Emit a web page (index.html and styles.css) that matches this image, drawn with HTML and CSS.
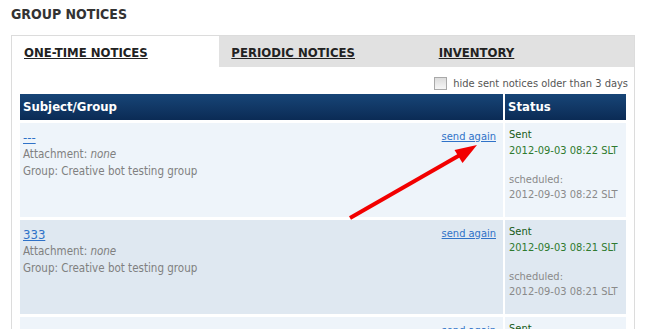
FILE: index.html
```html
<!DOCTYPE html>
<html>
<head>
<meta charset="utf-8">
<title>Group Notices</title>
<link rel="stylesheet" href="styles.css">
</head>
<body>
<div class="page">
  <h1 class="title">GROUP NOTICES</h1>
  <div class="panel">
    <div class="tabs">
      <div class="tab active"><a href="#">ONE-TIME NOTICES</a></div>
      <div class="tab"><a href="#">PERIODIC NOTICES</a></div>
      <div class="tab"><a href="#">INVENTORY</a></div>
    </div>
    <div class="filter">
      <input type="checkbox" class="check" id="hide">
      <label for="hide">hide sent notices older than 3 days</label>
    </div>
    <div class="grid">
      <div class="th">Subject/Group</div>
      <div class="th">Status</div>

      <div class="cell subj odd">
        <a class="send" href="#">send again</a>
        <a class="name" href="#">---</a>
        <div class="meta">Attachment: <i>none</i></div>
        <div class="meta">Group: Creative bot testing group</div>
      </div>
      <div class="cell status odd">
        <div class="sent">Sent</div>
        <div class="sent-date">2012-09-03 08:22 SLT</div>
        <div class="sched">scheduled:</div>
        <div class="sched-date">2012-09-03 08:22 SLT</div>
      </div>

      <div class="cell subj even">
        <a class="send" href="#">send again</a>
        <a class="name" href="#">333</a>
        <div class="meta">Attachment: <i>none</i></div>
        <div class="meta">Group: Creative bot testing group</div>
      </div>
      <div class="cell status even">
        <div class="sent">Sent</div>
        <div class="sent-date">2012-09-03 08:21 SLT</div>
        <div class="sched">scheduled:</div>
        <div class="sched-date">2012-09-03 08:21 SLT</div>
      </div>

      <div class="cell subj odd">
        <a class="send" href="#">send again</a>
      </div>
      <div class="cell status odd">
        <div class="sent">Sent</div>
      </div>
    </div>
  </div>
  <svg class="arrow" width="645" height="329" viewBox="0 0 645 329" aria-hidden="true">
    <line x1="350" y1="218" x2="460" y2="155" stroke="#f20000" stroke-width="4" stroke-linecap="butt"/>
    <polygon points="477,145 454.5,150 462.5,163" fill="#f20000"/>
  </svg>
</div>
</body>
</html>
```

FILE: styles.css
```css
html, body {
  margin: 0;
  padding: 0;
  overflow: hidden;
  background: #fff;
}

.page {
  position: relative;
  width: 645px;
  height: 329px;
  padding-left: 11px;
  box-sizing: border-box;
  font-family: "DejaVu Sans Condensed", "DejaVu Sans", sans-serif;
  font-stretch: condensed;
  color: #333;
  overflow: hidden;
}

.title {
  margin: 0;
  padding-top: 5px;
  font-size: 14px;
  line-height: 18px;
  font-weight: bold;
  color: #333;
}

.panel {
  margin-top: 12px;
  width: 624px;
  height: 320px;
  box-sizing: border-box;
  border: 1px solid #dcdcdc;
  border-bottom: none;
}

.tabs {
  display: flex;
  height: 31px;
  background: #e1e1e1;
}

.tab {
  flex: 1;
  padding-left: 12px;
  display: flex;
  align-items: center;
  padding-top: 1px;
  box-sizing: border-box;
}

.tab.active {
  background: #fff;
}

.tab a {
  font-size: 13px;
  font-weight: bold;
  color: #222;
  text-decoration: underline;
}

.filter {
  height: 27px;
  box-sizing: border-box;
  padding-top: 10px;
  padding-right: 6px;
  display: flex;
  justify-content: flex-end;
  align-items: flex-start;
  font-size: 11px;
  line-height: 13px;
  color: #555;
}

.check {
  appearance: none;
  -webkit-appearance: none;
  margin: 0 6px 0 0;
  width: 13px;
  height: 13px;
  box-sizing: border-box;
  border: 1px solid #a9a9a9;
  background: linear-gradient(to bottom, #dcdcdc, #f6f6f6);
}

.grid {
  margin: 0 8px;
  display: grid;
  grid-template-columns: 1fr 121px;
  grid-template-rows: 26px 94px 94px 94px;
  column-gap: 2px;
  row-gap: 3px;
}

.th {
  background: linear-gradient(to bottom, #174577 0%, #0b2b55 100%);
  color: #fff;
  font-weight: bold;
  font-size: 13px;
  line-height: 26px;
  padding-left: 3px;
}

.th + .th {
  padding-left: 3px;
}

.cell.odd { background: #eef4fa; }
.cell.even { background: #dfe8f1; }

.subj {
  padding: 6px 7px 0 3px;
  font-size: 11.5px;
  line-height: 17px;
  color: #808080;
}

.name {
  display: block;
  font-size: 13px;
  line-height: 17px;
  color: #2f72c8;
  text-decoration: underline;
  width: max-content;
}

.send {
  float: right;
  font-size: 11px;
  line-height: 15px;
  color: #2f72c8;
  text-decoration: underline;
}

.meta i {
  font-style: italic;
}

.status {
  padding: 4px 4px 0 4px;
  font-size: 11px;
  line-height: 15.5px;
}

.sent { color: #155a15; }
.sent-date { color: #2f7a2f; }
.sched { color: #8a8a8a; margin-top: 13.5px; }
.sched-date { color: #8a8a8a; }

.arrow {
  position: absolute;
  left: 0;
  top: 0;
  pointer-events: none;
}
```
